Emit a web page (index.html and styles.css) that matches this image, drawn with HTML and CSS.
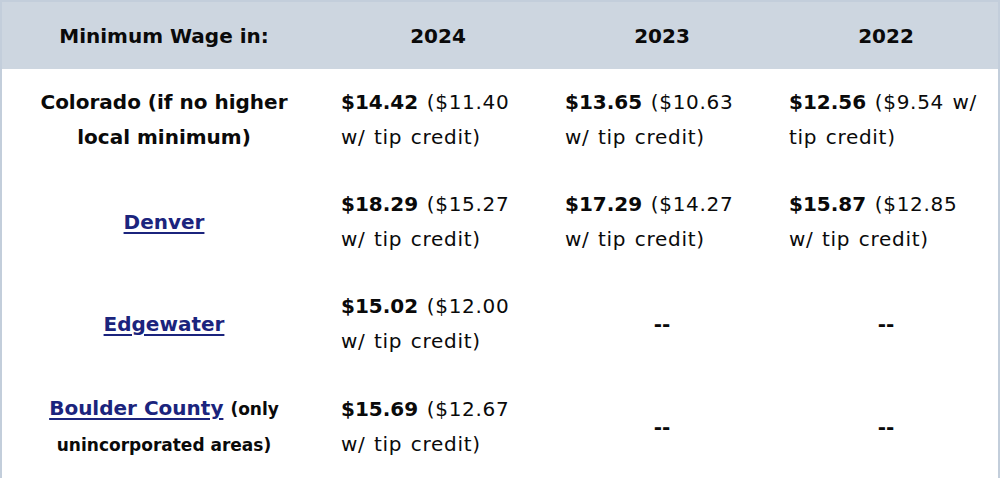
FILE: index.html
```html
<!DOCTYPE html>
<html>
<head>
<meta charset="utf-8">
<link rel="stylesheet" href="styles.css">
</head>
<body>
<table class="wage-table">
  <colgroup>
    <col class="col-place">
    <col class="col-year">
    <col class="col-year">
    <col class="col-year">
  </colgroup>
  <thead>
    <tr>
      <th>Minimum Wage in:</th>
      <th>2024</th>
      <th>2023</th>
      <th>2022</th>
    </tr>
  </thead>
  <tbody>
    <tr>
      <td class="place">Colorado (if no higher local minimum)</td>
      <td class="val"><b>$14.42</b> ($11.40 w/ tip credit)</td>
      <td class="val"><b>$13.65</b> ($10.63 w/ tip credit)</td>
      <td class="val"><b>$12.56</b> ($9.54 w/ tip credit)</td>
    </tr>
    <tr>
      <td class="place"><a href="#">Denver</a></td>
      <td class="val"><b>$18.29</b> ($15.27 w/ tip credit)</td>
      <td class="val"><b>$17.29</b> ($14.27 w/ tip credit)</td>
      <td class="val"><b>$15.87</b> ($12.85 w/ tip credit)</td>
    </tr>
    <tr>
      <td class="place"><a href="#">Edgewater</a></td>
      <td class="val"><b>$15.02</b> ($12.00 w/ tip credit)</td>
      <td class="none">--</td>
      <td class="none">--</td>
    </tr>
    <tr>
      <td class="place"><a href="#">Boulder County</a> <span class="note">(only unincorporated areas)</span></td>
      <td class="val"><b>$15.69</b> ($12.67 w/ tip credit)</td>
      <td class="none">--</td>
      <td class="none">--</td>
    </tr>
  </tbody>
</table>
</body>
</html>
```
FILE: styles.css
```css
html, body {
  margin: 0;
  padding: 0;
  background: #ffffff;
}

body {
  font-family: "DejaVu Sans", Verdana, sans-serif;
  color: #0a0a0a;
}

.wage-table {
  width: 999px;
  height: 477px;
  border-collapse: separate;
  border-spacing: 0;
  table-layout: fixed;
  border: 2px solid #c3cedb;
  box-sizing: border-box;
}

.col-place {
  width: 324px;
}

.col-year {
  width: 224px;
}

.wage-table th {
  background: #cdd6e0;
  font-size: 20px;
  font-weight: bold;
  line-height: 35px;
  height: 67px;
  padding: 2px 15px 0;
  text-align: center;
  vertical-align: middle;
  box-sizing: border-box;
}

.wage-table td {
  font-size: 20px;
  line-height: 35px;
  padding: 16px 15px;
  vertical-align: middle;
}

.place {
  text-align: center;
  font-weight: bold;
}

.place a {
  color: #1b247d;
  text-decoration: underline;
  text-decoration-thickness: 2px;
  text-underline-offset: 3px;
}

.note {
  font-size: 17px;
}

.val {
  text-align: left;
  letter-spacing: 0.7px;
  word-spacing: 1.5px;
}

.val b {
  letter-spacing: 0;
  word-spacing: 0;
}

.none {
  text-align: center;
  font-weight: bold;
}
```
